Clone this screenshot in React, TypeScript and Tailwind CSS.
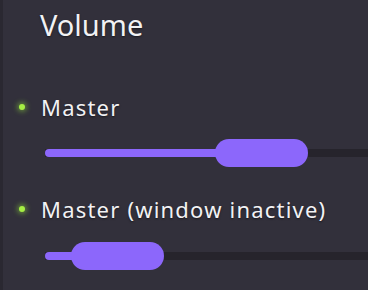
import React from "react";

function Slider({ fill, thumbLeft }: { fill: number; thumbLeft: number }) {
  return (
    <div className="relative h-[28px] w-full">
      <div className="absolute left-0 right-0 top-[10px] h-[8px] bg-[#26242c]" />
      <div
        className="absolute left-0 top-[10px] h-[8px] rounded-full bg-[#8c67fb]"
        style={{ width: fill }}
      />
      <div
        className="absolute top-0 h-[28px] w-[93px] rounded-full bg-[#8c67fb]"
        style={{ left: thumbLeft }}
      />
    </div>
  );
}

function Dot() {
  return (
    <div className="w-[6px] h-[6px] rounded-full bg-[#a5ee44] shadow-[0_0_5px_2px_rgba(150,230,60,0.45)]" />
  );
}

export default function App() {
  return (
    <div
      className="w-[368px] h-[290px] bg-[#32303b] flex overflow-hidden text-[#f2f2f4]"
      style={{ fontFamily: "'Noto Sans', sans-serif" }}
    >
      <div className="w-[3px] h-full bg-[#2a2831]" />
      <div className="flex-1 flex flex-col">
        <div className="pl-[37px] pt-[7px] text-[29px] leading-[36px] [text-shadow:0_1px_2px_rgba(0,0,0,0.5)]">
          Volume
        </div>
        <div className="mt-[50px] flex items-center h-[28px]">
          <div className="w-[38px] flex justify-start pl-[16px]">
            <Dot />
          </div>
          <span className="text-[22px] tracking-[1.2px] [text-shadow:0_1px_2px_rgba(0,0,0,0.5)]">Master</span>
        </div>
        <div className="mt-[18px] pl-[42px]">
          <Slider fill={190} thumbLeft={170} />
        </div>
        <div className="mt-[28px] flex items-center h-[28px]">
          <div className="w-[38px] flex justify-start pl-[16px]">
            <Dot />
          </div>
          <span className="text-[22px] tracking-[1.2px] [text-shadow:0_1px_2px_rgba(0,0,0,0.5)]">
            Master (window inactive)
          </span>
        </div>
        <div className="mt-[19px] pl-[42px]">
          <Slider fill={40} thumbLeft={26} />
        </div>
      </div>
    </div>
  );
}
